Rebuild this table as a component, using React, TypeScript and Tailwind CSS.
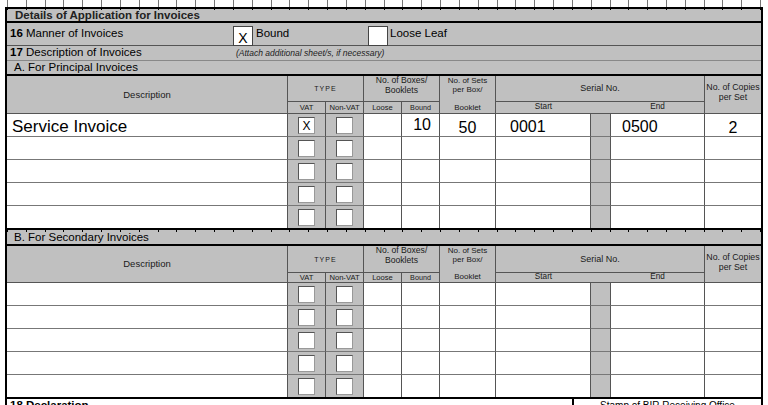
import React from 'react';

const cols = 'grid grid-cols-[281px_38px_38px_38px_38px_56px_95px_20px_94px_56px]';

interface RowData {
  desc?: string;
  vat?: boolean;
  bound?: string;
  sets?: string;
  start?: string;
  end?: string;
  copies?: string;
}

const principal: RowData[] = [
  { desc: 'Service Invoice', vat: true, bound: '10', sets: '50', start: '0001', end: '0500', copies: '2' },
  {},
  {},
  {},
  {},
];

const secondary: RowData[] = [{}, {}, {}, {}, {}];

const Ticks: React.FC<{ className: string }> = ({ className }) => (
  <div className={`flex ${className}`}>
    {Array.from({ length: 40 }).map((_, i) => (
      <div key={i} className={i === 39 ? 'flex-1 border-l border-r border-inherit' : 'flex-1 border-l border-inherit'} />
    ))}
  </div>
);

const Box: React.FC<{ checked?: boolean }> = ({ checked }) => (
  <div className="w-[17px] h-[17px] bg-white border border-t-[#555] border-l-[#555] border-b-[#999] border-r-[#999] flex items-end justify-center text-[12px] leading-none pb-[1px]">
    {checked ? 'X' : ''}
  </div>
);

const Header: React.FC<{ rows: string }> = ({ rows }) => (
  <div className={`${cols} ${rows} bg-[#c0c0c0] text-[#1a1a1a] leading-none`}>
    <div className="row-span-2 flex items-center justify-center border-r border-b border-[#555] text-[9.5px]">
      Description
    </div>
    <div className="col-span-2 flex items-center justify-center border-r border-b border-[#555] text-[7px] tracking-[1px]">
      TYPE
    </div>
    <div className="col-span-2 flex flex-col items-center border-r border-b border-[#555] text-[8.6px] leading-[9.5px]">
      <span>No. of Boxes/</span>
      <span>Booklets</span>
    </div>
    <div className="row-span-2 flex flex-col items-center justify-between pb-[1px] border-r border-b border-[#555] text-[8px] leading-[9px]">
      <div className="flex flex-col items-center">
        <span>No. of Sets</span>
        <span>per Box/</span>
      </div>
      <span>Booklet</span>
    </div>
    <div className="col-span-3 flex items-center justify-center border-r border-b border-[#555] text-[9px]">
      Serial No.
    </div>
    <div className="row-span-2 flex flex-col items-center pt-[7px] border-b border-[#555] text-[8.8px] leading-[9.5px]">
      <span>No. of Copies</span>
      <span>per Set</span>
    </div>
    <div className="flex items-center justify-center border-r border-b border-[#555] text-[7.6px]">VAT</div>
    <div className="flex items-center justify-center border-r border-b border-[#555] text-[7.6px]">Non-VAT</div>
    <div className="flex items-center justify-center border-r border-b border-[#555] text-[7.6px]">Loose</div>
    <div className="flex items-center justify-center border-r border-b border-[#555] text-[7.2px]">Bound</div>
    <div className="flex items-center justify-center border-b border-[#555] text-[8.2px]">Start</div>
    <div className="border-b border-[#555]" />
    <div className="flex items-center justify-center border-r border-b border-[#555] text-[8.2px]">End</div>
  </div>
);

const DataRow: React.FC<{ row: RowData; last: boolean }> = ({ row, last }) => {
  const line = last ? 'border-[#555]' : 'border-b border-b-[#777] border-[#555]';
  return (
    <div className={`${cols} ${last ? 'h-[22px]' : 'h-[23px]'} text-[16px] leading-none text-black`}>
      <div className={`border-r ${line} pl-[5px] pt-[4px] text-[17px]`}>{row.desc}</div>
      <div className={`border-r ${line} bg-[#c0c0c0] flex items-center justify-center`}>
        <Box checked={row.vat} />
      </div>
      <div className={`border-r ${line} bg-[#c0c0c0] flex items-center justify-center`}>
        <Box />
      </div>
      <div className={`border-r ${line}`} />
      <div className={`border-r ${line} flex justify-end pr-[8px] pt-[3px]`}>{row.bound}</div>
      <div className={`border-r ${line} flex justify-center pt-[6px]`}>{row.sets}</div>
      <div className={`border-r ${line} pl-[14px] pt-[5px]`}>{row.start}</div>
      <div className={`border-r ${line} bg-[#c0c0c0]`} />
      <div className={`border-r ${line} pl-[11px] pt-[5px]`}>{row.end}</div>
      <div className={`${last ? '' : 'border-b border-b-[#777]'} flex justify-center pt-[6px]`}>{row.copies}</div>
    </div>
  );
};

export default function App() {
  return (
    <div className="w-[768px] h-[405px] overflow-hidden bg-white font-['Liberation_Sans',Arial,sans-serif] text-black">
      <Ticks className="ml-[7px] w-[754px] h-[7px] border-[#777]" />
      <div className="ml-[5px] w-[758px] border-x-2 border-t-2 border-black">
        <div className="h-[14px] flex flex-col bg-[#c0c0c0] border-b-2 border-black">
          <Ticks className="h-[2px] border-black" />
          <div className="flex-1 flex items-center pl-[8px] text-[11.5px] font-bold leading-none text-[#222]">
            Details of Application for Invoices
          </div>
        </div>
        <div className="h-[23px] flex items-center bg-[#c0c0c0] border-b border-[#555] text-[11.5px] leading-none">
          <div className="w-[226px] pl-[3px]">
            <b>16</b> Manner of Invoices
          </div>
          <div className="w-[20px] h-[20px] self-end mb-[-1px] bg-white border border-[#444] flex items-end justify-center text-[14px] leading-none">
            X
          </div>
          <div className="w-[115px] pl-[3px]">Bound</div>
          <div className="w-[20px] h-[20px] self-end mb-[-1px] bg-white border border-[#444]" />
          <div className="pl-[2px]">Loose Leaf</div>
        </div>
        <div className="h-[15px] flex items-center bg-[#c0c0c0] border-b border-[#888] leading-none">
          <div className="w-[229px] pl-[3px] text-[11.5px]">
            <b>17</b> Description of Invoices
          </div>
          <div className="text-[8.5px] italic text-[#222]">(Attach additional sheet/s, if necessary)</div>
        </div>
        <div className="h-[15px] flex items-center bg-[#c0c0c0] border-b-2 border-black pl-[7px] text-[11.5px] leading-none">
          A. For Principal Invoices
        </div>
        <Header rows="grid-rows-[26px_12px]" />
        {principal.map((row, i) => (
          <DataRow key={i} row={row} last={i === principal.length - 1} />
        ))}
        <div className="h-[18px] flex flex-col bg-[#c0c0c0] border-y-2 border-black">
          <Ticks className="h-[2px] border-black" />
          <div className="flex-1 flex items-center pl-[7px] text-[11.5px] leading-none">B. For Secondary Invoices</div>
        </div>
        <Header rows="grid-rows-[27px_10px]" />
        {secondary.map((row, i) => (
          <DataRow key={i} row={row} last={i === secondary.length - 1} />
        ))}
        <div className="h-[30px] flex border-t-2 border-black">
          <div className="w-[565px] pl-[3px] pt-[1px] text-[11.5px] leading-none">
            <b>18 Declaration</b>
          </div>
          <div className="flex-1 border-l-2 border-black flex justify-center pt-[2px] text-[10px] leading-none">
            Stamp of BIR Receiving Office
          </div>
        </div>
      </div>
    </div>
  );
}
